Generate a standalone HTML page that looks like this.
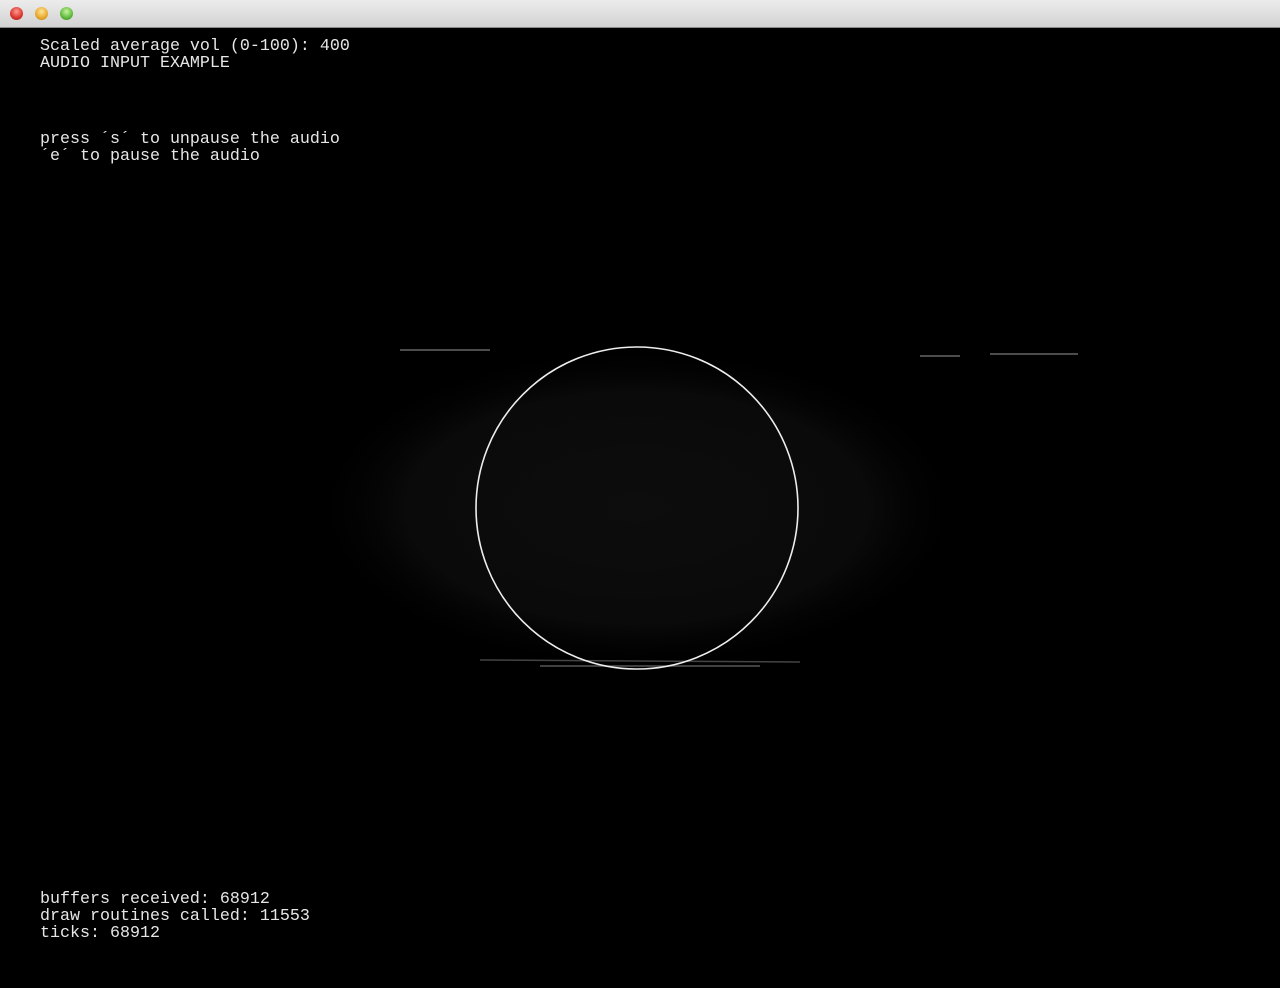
<!DOCTYPE html>
<html><head><meta charset="utf-8"><style>
html,body{margin:0;padding:0;width:1280px;height:988px;overflow:hidden;background:#000;}
.bar{position:absolute;left:0;top:0;width:1280px;height:27px;background:linear-gradient(#ececec,#d2d2d2);border-bottom:1px solid #8a8a8a;}
.b{position:absolute;top:7px;width:13px;height:13px;border-radius:50%;}
.t{position:absolute;left:40px;font-family:"Liberation Mono",monospace;font-size:16.67px;line-height:17px;color:#e6e6e6;white-space:pre;}
</style></head><body>
<div class="bar">
<div class="b" style="left:10px;background:radial-gradient(circle at 50% 35%,#ff9a90,#d8352c 60%,#a3211b);"></div>
<div class="b" style="left:35px;background:radial-gradient(circle at 50% 35%,#ffe59a,#e7a82a 60%,#b07a14);"></div>
<div class="b" style="left:60px;background:radial-gradient(circle at 50% 35%,#c8f5a0,#5cb83a 60%,#3a8322);"></div>
</div>
<div class="t" style="top:38px">Scaled average vol (0-100): 400
AUDIO INPUT EXAMPLE</div>
<div class="t" style="top:131px">press ´s´ to unpause the audio
´e´ to pause the audio</div>
<div class="t" style="top:891px">buffers received: 68912
draw routines called: 11553
ticks: 68912</div>
<svg width="1280" height="988" style="position:absolute;left:0;top:0">
<defs><radialGradient id="g" cx="637" cy="508" r="330" gradientUnits="userSpaceOnUse" gradientTransform="translate(0,508) scale(1,0.5) translate(0,-508)">
<stop offset="0" stop-color="#1a1a1a" stop-opacity="0.5"/><stop offset="0.7" stop-color="#141414" stop-opacity="0.5"/><stop offset="1" stop-color="#000" stop-opacity="0"/></radialGradient></defs>
<ellipse cx="637" cy="505" rx="430" ry="170" fill="url(#g)"/>
<g stroke="#666" stroke-width="1.5">
<line x1="400" y1="350" x2="490" y2="350"/><line x1="920" y1="356" x2="960" y2="356"/><line x1="990" y1="354" x2="1078" y2="354"/>
<line x1="480" y1="660" x2="800" y2="662" stroke="#444"/><line x1="540" y1="666" x2="760" y2="666" stroke="#555"/>
</g>
<circle cx="637" cy="508" r="161" fill="none" stroke="#eee" stroke-width="1.6"/>
</svg>
</body></html>
